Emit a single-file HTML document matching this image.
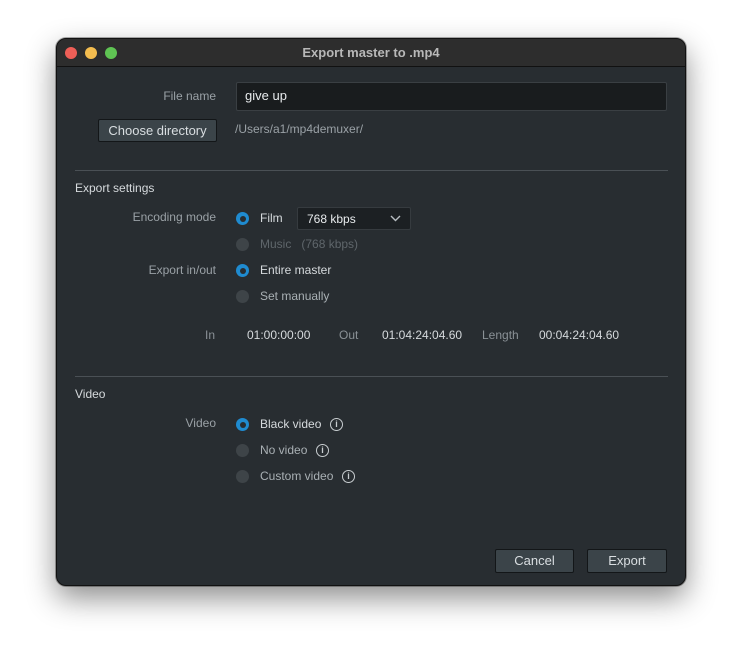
<!DOCTYPE html>
<html><head><style>
*{box-sizing:border-box;margin:0;padding:0}
body{width:742px;height:660px;background:#fff;font-family:"Liberation Sans","DejaVu Sans",sans-serif;font-size:12px;position:relative;overflow:hidden}
.win{position:absolute;left:56px;top:38px;width:630px;height:548px;background:#282d31;border-radius:10px;border:1px solid #111;box-shadow:0 12px 30px rgba(0,0,0,.45),0 0 0 1px rgba(0,0,0,.3);overflow:hidden}
.tb{height:28px;background:#2d2d2d;border-bottom:1px solid #111;position:relative;text-align:center;line-height:27px;color:#b8b8b8;font-weight:bold;font-size:13px}
.d{position:absolute;top:8px;width:12px;height:12px;border-radius:50%}
.a{position:absolute;white-space:nowrap}
.lbl{color:#9aa1a6;text-align:right;width:140px;left:19px}
.txt{color:#d6dadd}
.dim{color:#5f666b}
.r{position:absolute;width:13px;height:13px;border-radius:50%;background:#3e4448}
.r.on{background:#1f8bd0}
.r.on::after{content:"";position:absolute;left:3.5px;top:3.5px;width:6px;height:6px;border-radius:50%;background:#282d31}
.btn{position:absolute;background:#3b4449;border:1px solid #131618;border-radius:2px;color:#d9dee1;text-align:center;font-size:13px}
.hr{position:absolute;left:18px;width:593px;height:1px;background:#4a5055}
.i{position:absolute;width:13px;height:13px;border:1.3px solid #c8cdd0;border-radius:50%;color:#c8cdd0;font-size:9px;line-height:11px;text-align:center;font-weight:bold}
</style></head><body>
<div class="win">
<div class="tb">Export master to .mp4
<div class="d" style="left:8px;background:#ee5f57"></div><div class="d" style="left:28px;background:#f4bd4f"></div><div class="d" style="left:48px;background:#5fc453"></div></div>
<div class="a lbl" style="top:50px">File name</div>
<div class="a" style="left:179px;top:43px;width:431px;height:29px;background:#191c1e;border:1px solid #3a3f43;border-radius:2px;color:#e8ebed;font-size:13px;padding:5px 8px">give up</div>
<div class="btn" style="left:41px;top:80px;width:119px;height:23px;line-height:21px">Choose directory</div>
<div class="a" style="left:178px;top:83px;color:#9aa1a6">/Users/a1/mp4demuxer/</div>
<div class="hr" style="top:131px"></div>
<div class="a txt" style="left:18px;top:142px">Export settings</div>
<div class="a lbl" style="top:171px">Encoding mode</div>
<div class="r on" style="left:179px;top:173px"></div><div class="a txt" style="left:203px;top:172px">Film</div>
<div class="a" style="left:240px;top:168px;width:114px;height:23px;background:#1c2023;border:1px solid #363b3f;border-radius:2px;color:#e8ebed;padding:4px 9px">768 kbps<svg style="position:absolute;right:9px;top:7px" width="11" height="7"><path d="M1 1l4.5 4.5L10 1" stroke="#b8bec2" stroke-width="1.4" fill="none"/></svg></div>
<div class="r" style="left:179px;top:199px"></div><div class="a dim" style="left:203px;top:198px">Music&nbsp;&nbsp;&nbsp;<span>(768 kbps)</span></div>
<div class="a lbl" style="top:224px">Export in/out</div>
<div class="r on" style="left:179px;top:225px"></div><div class="a txt" style="left:203px;top:224px">Entire master</div>
<div class="r" style="left:179px;top:251px"></div><div class="a" style="left:203px;top:250px;color:#a9b0b4">Set manually</div>
<div class="a" style="left:148px;top:289px;color:#8a9196">In</div>
<div class="a txt" style="left:190px;top:289px">01:00:00:00</div>
<div class="a" style="left:282px;top:289px;color:#8a9196">Out</div>
<div class="a txt" style="left:325px;top:289px">01:04:24:04.60</div>
<div class="a" style="left:425px;top:289px;color:#8a9196">Length</div>
<div class="a txt" style="left:482px;top:289px">00:04:24:04.60</div>
<div class="hr" style="top:337px"></div>
<div class="a txt" style="left:18px;top:348px">Video</div>
<div class="a lbl" style="top:377px">Video</div>
<div class="r on" style="left:179px;top:379px"></div><div class="a txt" style="left:203px;top:378px">Black video</div><div class="i" style="left:273px;top:379px">i</div>
<div class="r" style="left:179px;top:405px"></div><div class="a" style="left:203px;top:404px;color:#a9b0b4">No video</div><div class="i" style="left:259px;top:405px">i</div>
<div class="r" style="left:179px;top:431px"></div><div class="a" style="left:203px;top:430px;color:#a9b0b4">Custom video</div><div class="i" style="left:285px;top:431px">i</div>
<div class="btn" style="left:438px;top:510px;width:79px;height:24px;line-height:22px">Cancel</div>
<div class="btn" style="left:530px;top:510px;width:80px;height:24px;line-height:22px">Export</div>
</div>
</body></html>
